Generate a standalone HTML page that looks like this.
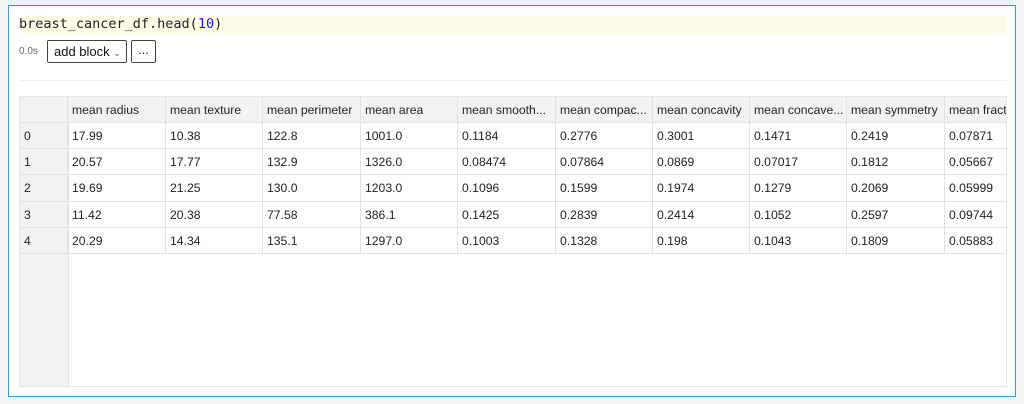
<!DOCTYPE html>
<html><head><style>
body{margin:0;background:#f3f3f3;width:1024px;height:404px;overflow:hidden;font-family:"Liberation Sans",sans-serif;}
.cell{position:absolute;left:8px;top:5px;width:1006px;height:390px;border:1px solid #3a95d0;background:#fff;}
.code{position:absolute;left:10px;top:10px;width:988px;height:17px;background:#fdfbe6;font-family:"DejaVu Sans Mono",monospace;font-size:13.5px;line-height:17px;color:#222;}
.code span{color:#1a1aff}
.time{position:absolute;left:10px;top:40px;font-size:10px;color:#666}
.btn{position:absolute;top:34px;height:23px;border:1px solid #444;border-radius:2px;font-size:13px;line-height:22px;color:#111;box-sizing:border-box;}
.hr{position:absolute;left:10px;top:74px;width:988px;height:1px;background:#eee}
.tbl{position:absolute;left:10px;top:90px;width:988px;height:291px;background:#fff;border:1px solid #e6e6e6;box-sizing:border-box;overflow:hidden}
.idxcol{position:absolute;left:0;top:0;width:48px;height:290px;background:#f2f2f2;border-right:1px solid #e2e2e2}
.hdr{position:absolute;left:0;top:0;width:988px;height:26px;background:#f2f2f2;}
.c{position:absolute;line-height:26px;font-size:12.2px;color:#222;padding-left:4px;box-sizing:border-box;border-right:1px solid #e2e2e2;border-bottom:1px solid #e2e2e2;white-space:nowrap;overflow:hidden}
</style></head><body>
<div class="cell">
<div class="code">breast_cancer_df.head(<span>10</span>)</div>
<div class="time">0.0s</div>
<div class="btn" style="left:38px;width:80px;padding-left:6px">add block <span style="font-size:9px;color:#666">&#8964;</span></div>
<div class="btn" style="left:122px;width:25px;text-align:center;line-height:18px">...</div>
<div class="hr"></div>
<div class="tbl" id="t"><div class="idxcol"></div><div class="hdr"></div></div>
</div>
<script>
var t=document.getElementById('t');
var xs=[0,48,146,243,341,438,536,633,730,827,925,1030];
var ys=[0,26,52,78,105,131,157];
var H=["","mean radius","mean texture","mean perimeter","mean area","mean smooth...","mean compac...","mean concavity","mean concave...","mean symmetry","mean fractal dimension"];
var D=[["0","17.99","10.38","122.8","1001.0","0.1184","0.2776","0.3001","0.1471","0.2419","0.07871"],
["1","20.57","17.77","132.9","1326.0","0.08474","0.07864","0.0869","0.07017","0.1812","0.05667"],
["2","19.69","21.25","130.0","1203.0","0.1096","0.1599","0.1974","0.1279","0.2069","0.05999"],
["3","11.42","20.38","77.58","386.1","0.1425","0.2839","0.2414","0.1052","0.2597","0.09744"],
["4","20.29","14.34","135.1","1297.0","0.1003","0.1328","0.198","0.1043","0.1809","0.05883"]];
var rows=[H].concat(D),h='';
rows.forEach(function(r,i){r.forEach(function(v,j){h+='<div class="c" style="left:'+xs[j]+'px;top:'+ys[i]+'px;height:'+(ys[i+1]-ys[i])+'px;width:'+(xs[j+1]-xs[j])+'px">'+v+'</div>';});});
t.innerHTML+=h;
</script>
</body></html>
